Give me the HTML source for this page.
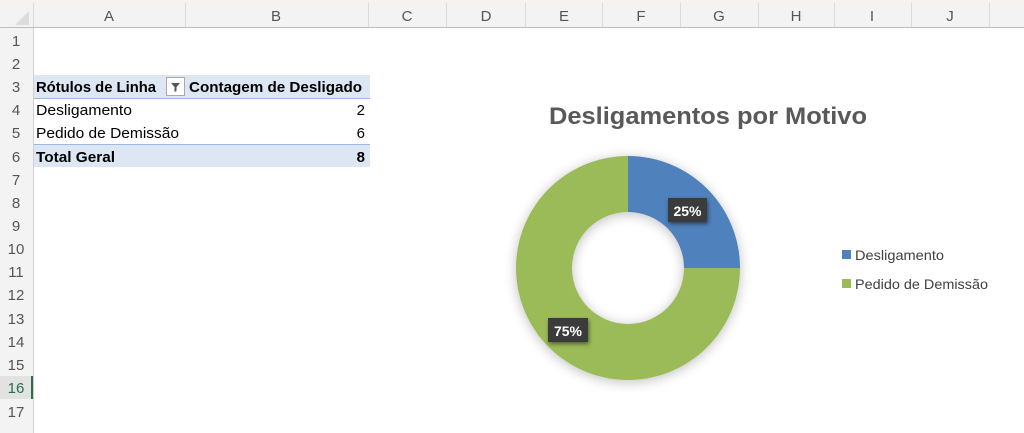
<!DOCTYPE html>
<html><head><meta charset="utf-8"><style>
html,body{margin:0;padding:0;background:#fff;width:1024px;height:433px;overflow:hidden}
svg{display:block;font-family:"Liberation Sans",sans-serif}
</style></head><body>
<svg width="1024" height="433" viewBox="0 0 1024 433" xmlns="http://www.w3.org/2000/svg">
<defs>
<filter id="sh" x="-30%" y="-30%" width="160%" height="160%"><feGaussianBlur in="SourceAlpha" stdDeviation="6"/><feOffset dx="0" dy="2"/><feComponentTransfer><feFuncA type="linear" slope="0.25"/></feComponentTransfer><feMerge><feMergeNode/><feMergeNode in="SourceGraphic"/></feMerge></filter>
<filter id="ls" x="-30%" y="-30%" width="160%" height="160%"><feGaussianBlur in="SourceAlpha" stdDeviation="2"/><feOffset dx="1" dy="2"/><feComponentTransfer><feFuncA type="linear" slope="0.5"/></feComponentTransfer><feMerge><feMergeNode/><feMergeNode in="SourceGraphic"/></feMerge></filter>
</defs>
<rect x="0" y="0" width="1024" height="27" fill="#f3f3f3"/>
<rect x="0" y="0" width="1024" height="3" fill="#f7f2ee"/>
<line x1="0" y1="27.5" x2="1024" y2="27.5" stroke="#bdbdbd"/>
<polygon points="29,11 29,25 15,25" fill="#dcdcdc"/>
<g stroke="#dadada">
<line x1="33.5" y1="3" x2="33.5" y2="27"/><line x1="185.5" y1="3" x2="185.5" y2="27"/><line x1="368.5" y1="3" x2="368.5" y2="27"/><line x1="446.5" y1="3" x2="446.5" y2="27"/><line x1="525.5" y1="3" x2="525.5" y2="27"/><line x1="602.5" y1="3" x2="602.5" y2="27"/><line x1="680.5" y1="3" x2="680.5" y2="27"/><line x1="758.5" y1="3" x2="758.5" y2="27"/><line x1="834.5" y1="3" x2="834.5" y2="27"/><line x1="911.5" y1="3" x2="911.5" y2="27"/><line x1="989.5" y1="3" x2="989.5" y2="27"/>
</g>
<g font-size="15" fill="#555" text-anchor="middle">
<text x="109" y="21">A</text><text x="276" y="21">B</text><text x="407" y="21">C</text><text x="486" y="21">D</text><text x="564" y="21">E</text><text x="641" y="21">F</text><text x="719" y="21">G</text><text x="796" y="21">H</text><text x="872" y="21">I</text><text x="950" y="21">J</text>
</g>
<rect x="0" y="28" width="33" height="405" fill="#f3f3f3"/>
<line x1="33.5" y1="28" x2="33.5" y2="433" stroke="#cfcfcf"/>
<rect x="0" y="376" width="33" height="23" fill="#e2e2e2"/>
<rect x="31" y="376" width="2" height="23" fill="#217346"/>
<g font-size="15" fill="#555" text-anchor="middle">
<text x="16" y="46">1</text><text x="16" y="69">2</text><text x="16" y="92">3</text><text x="16" y="115">4</text><text x="16" y="138">5</text><text x="16" y="162">6</text><text x="16" y="185">7</text><text x="16" y="208">8</text><text x="16" y="231">9</text><text x="16" y="254">10</text><text x="16" y="277">11</text><text x="16" y="300">12</text><text x="16" y="324">13</text><text x="16" y="347">14</text><text x="16" y="370">15</text><text x="16" y="393" fill="#217346">16</text><text x="16" y="417">17</text>
</g>
<rect x="34" y="75" width="336" height="23" fill="#dde7f3"/>
<line x1="34" y1="98.5" x2="370" y2="98.5" stroke="#9db9dd"/>
<rect x="34" y="144" width="336" height="23" fill="#dde7f3"/>
<line x1="34" y1="144.5" x2="370" y2="144.5" stroke="#9db9dd"/>
<rect x="166.5" y="77.5" width="18" height="18" fill="#fff" stroke="#a9a9a9"/>
<path d="M171 83 h9 l-3.5 4 v4 l-2 1 v-5 z" fill="#555"/>
<g font-size="15" fill="#000">
<text x="36" y="92" font-weight="bold" textLength="120" lengthAdjust="spacingAndGlyphs">Rótulos de Linha</text>
<text x="189" y="92" font-weight="bold" textLength="173" lengthAdjust="spacingAndGlyphs">Contagem de Desligado</text>
<text x="36" y="115" textLength="96" lengthAdjust="spacingAndGlyphs">Desligamento</text>
<text x="36" y="138" textLength="143" lengthAdjust="spacingAndGlyphs">Pedido de Demissão</text>
<text x="36" y="162" font-weight="bold" textLength="79" lengthAdjust="spacingAndGlyphs">Total Geral</text>
<text x="365" y="115" text-anchor="end">2</text>
<text x="365" y="138" text-anchor="end">6</text>
<text x="365" y="162" text-anchor="end" font-weight="bold">8</text>
</g>
<text x="549" y="124" font-size="24" font-weight="bold" fill="#595959" textLength="318" lengthAdjust="spacingAndGlyphs">Desligamentos por Motivo</text>
<g filter="url(#sh)">
<path d="M628 156 A112 112 0 0 1 740 268 L684 268 A56 56 0 0 0 628 212 Z" fill="#4f81bd"/>
<path d="M740 268 A112 112 0 1 1 628 156 L628 212 A56 56 0 1 0 684 268 Z" fill="#9bbb59"/>
</g>
<g filter="url(#ls)">
<rect x="668" y="198" width="39" height="24" fill="#3b3b3b"/>
<rect x="548" y="318" width="40" height="24" fill="#3b3b3b"/>
</g>
<text x="687.5" y="216" font-size="14" font-weight="bold" fill="#fff" text-anchor="middle">25%</text>
<text x="568" y="336" font-size="14" font-weight="bold" fill="#fff" text-anchor="middle">75%</text>
<rect x="842" y="250" width="9" height="9" fill="#4f81bd"/>
<rect x="842" y="279" width="9" height="9" fill="#9bbb59"/>
<text x="855" y="260" font-size="14" fill="#404040" textLength="89" lengthAdjust="spacingAndGlyphs">Desligamento</text>
<text x="855" y="289" font-size="14" fill="#404040" textLength="133" lengthAdjust="spacingAndGlyphs">Pedido de Demissão</text>
</svg>
</body></html>
